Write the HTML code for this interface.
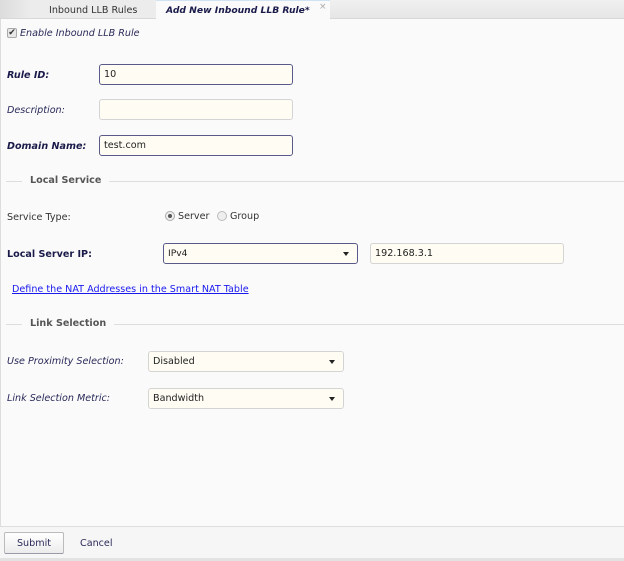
<!DOCTYPE html>
<html><head><style>
*{margin:0;padding:0;box-sizing:border-box}
body{width:624px;height:561px;background:#fafafa;font-family:"DejaVu Sans","Liberation Sans",sans-serif;font-size:9.6px;color:#333;position:relative;overflow:hidden}
.a{position:absolute;white-space:nowrap}
.lbl{color:#2a2a5a;font-style:italic}
.b{font-weight:bold}
.inp{position:absolute;background:#fffdf3;border:1px solid #d4d4d4;border-radius:3px;padding-left:4px;line-height:20px;color:#222}
.foc{border:1px solid #5a5a8a}
.sel::after{content:"";position:absolute;right:8px;top:8px;border-left:3.5px solid transparent;border-right:3.5px solid transparent;border-top:4px solid #222}
.sec{position:absolute;left:6px;right:0;height:1px;background:#ddd}
.sect{position:absolute;background:#fafafa;padding:0 8px;font-weight:bold;color:#555}
</style></head><body>
<div class="a" style="left:0;top:0;width:624px;height:19px;background:linear-gradient(#f0f0f0,#e6e6e6);border-bottom:1px solid #d8d8d8"></div>
<div class="a" style="left:0;top:0;width:156px;height:18px;background:linear-gradient(90deg,#dcdcdc,#ececec 20%,#ececec)"></div>
<div class="a" style="left:49px;top:5px;color:#333">Inbound LLB Rules</div>
<div class="a" style="left:156px;top:0;width:174px;height:19px;background:#fafafa;border-top:1px solid #cfe3f3"></div>
<div class="a" style="left:166px;top:5px;color:#1a1a4a;font-weight:bold;font-style:italic;font-size:9.2px">Add New Inbound LLB Rule*</div>
<div class="a" style="left:319px;top:2px;color:#aaa;font-size:9px">×</div>
<div class="a" style="left:0;top:19px;width:1px;height:540px;background:#ddd"></div>
<div class="a" style="left:7px;top:28px;width:10px;height:10px;border:1px solid #aaa;background:#e8e8e8;border-radius:2px;font-size:9px;line-height:8px;text-align:center;color:#333">✔</div>
<div class="a lbl" style="left:20px;top:28px">Enable Inbound LLB Rule</div>
<div class="a lbl b" style="left:7px;top:70px;color:#1a1a4a">Rule ID:</div>
<div class="inp foc" style="left:99px;top:64px;width:194px;height:21px">10</div>
<div class="a lbl" style="left:7px;top:105px">Description:</div>
<div class="inp" style="left:99px;top:99px;width:194px;height:21px"></div>
<div class="a lbl b" style="left:7px;top:141px;color:#1a1a4a">Domain Name:</div>
<div class="inp foc" style="left:99px;top:135px;width:194px;height:21px">test.com</div>
<div class="sec" style="top:181px"></div>
<div class="sect" style="left:22px;top:175px">Local Service</div>
<div class="a" style="left:7px;top:212px">Service Type:</div>
<div class="a" style="left:165px;top:211px;width:10px;height:10px;border:1px solid #aaa;border-radius:50%;background:#eee"><div style="position:absolute;left:2px;top:2px;width:4px;height:4px;border-radius:50%;background:#555"></div></div>
<div class="a" style="left:178px;top:211px">Server</div>
<div class="a" style="left:217px;top:211px;width:10px;height:10px;border:1px solid #bbb;border-radius:50%;background:#eee"></div>
<div class="a" style="left:230px;top:211px">Group</div>
<div class="a b" style="left:7px;top:249px;color:#1a1a4a">Local Server IP:</div>
<div class="inp foc sel" style="left:163px;top:243px;width:195px;height:21px;font-size:9.2px">IPv4</div>
<div class="inp" style="left:370px;top:243px;width:194px;height:21px">192.168.3.1</div>
<div class="a" style="left:12px;top:284px;color:#1a1aee;text-decoration:underline;font-size:9.6px">Define the NAT Addresses in the Smart NAT Table</div>
<div class="sec" style="top:324px"></div>
<div class="sect" style="left:22px;top:318px">Link Selection</div>
<div class="a lbl" style="left:7px;top:356px">Use Proximity Selection:</div>
<div class="inp sel" style="left:148px;top:351px;width:196px;height:21px">Disabled</div>
<div class="a lbl" style="left:7px;top:393px">Link Selection Metric:</div>
<div class="inp sel" style="left:148px;top:388px;width:196px;height:21px">Bandwidth</div>
<div class="a" style="left:0;top:526px;width:624px;height:1px;background:#ddd"></div>
<div class="a" style="left:0;top:527px;width:624px;height:31px;background:#f6f6f6"></div>
<div class="a" style="left:0;top:558px;width:624px;height:3px;background:#e2e2e2"></div>
<div class="a" style="left:4px;top:532px;width:60px;height:22px;border:1px solid #bbb;border-bottom-color:#99a;border-radius:2px;background:linear-gradient(#fff,#ececec);text-align:center;line-height:21px;color:#2a2a5a">Submit</div>
<div class="a" style="left:80px;top:538px;color:#2a2a5a">Cancel</div>
</body></html>
